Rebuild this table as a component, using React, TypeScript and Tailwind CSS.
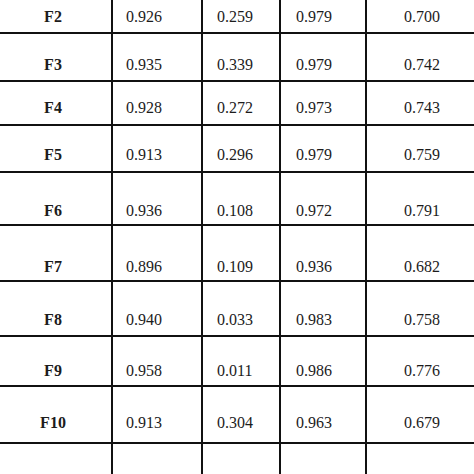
type Row = {
  label: string;
  values: string[];
  height: string;
  pad: string;
};

const rows: Row[] = [
  { label: "F2", values: ["0.926", "0.259", "0.979", "0.700"], height: "h-[34px]", pad: "pt-[9px]" },
  { label: "F3", values: ["0.935", "0.339", "0.979", "0.742"], height: "h-[48px]", pad: "pt-[23px]" },
  { label: "F4", values: ["0.928", "0.272", "0.973", "0.743"], height: "h-[44px]", pad: "pt-[18px]" },
  { label: "F5", values: ["0.913", "0.296", "0.979", "0.759"], height: "h-[47px]", pad: "pt-[21px]" },
  { label: "F6", values: ["0.936", "0.108", "0.972", "0.791"], height: "h-[53px]", pad: "pt-[30px]" },
  { label: "F7", values: ["0.896", "0.109", "0.936", "0.682"], height: "h-[56px]", pad: "pt-[33px]" },
  { label: "F8", values: ["0.940", "0.033", "0.983", "0.758"], height: "h-[55px]", pad: "pt-[30px]" },
  { label: "F9", values: ["0.958", "0.011", "0.986", "0.776"], height: "h-[50px]", pad: "pt-[26px]" },
  { label: "F10", values: ["0.913", "0.304", "0.963", "0.679"], height: "h-[57px]", pad: "pt-[28px]" },
];

const valuePads = ["pl-[13px]", "pl-[14px]", "pl-[15px]", "pl-[37px]"];

function TableRow({ row }: { row: Row }) {
  return (
    <div className={`grid grid-cols-[113px_90px_78px_86px_1fr] border-b-2 border-[#111] ${row.height}`}>
      <div className={`border-r-2 border-[#111] text-center pr-[5px] font-bold ${row.pad}`}>{row.label}</div>
      {row.values.map((v, i) => (
        <div
          key={i}
          className={`${i < 3 ? "border-r-2 border-[#111]" : ""} ${valuePads[i]} ${row.pad}`}
        >
          {v}
        </div>
      ))}
    </div>
  );
}

export default function App() {
  return (
    <div className="w-[474px] h-[474px] overflow-hidden bg-white text-[16px] leading-none text-[#1c1c1c] font-['Liberation_Serif','Times_New_Roman',serif]">
      {rows.map((r) => (
        <TableRow key={r.label} row={r} />
      ))}
      {/* next row, cut off by the frame */}
      <div className="grid grid-cols-[113px_90px_78px_86px_1fr] h-[60px]">
        <div className="border-r-2 border-[#111]" />
        <div className="border-r-2 border-[#111]" />
        <div className="border-r-2 border-[#111]" />
        <div className="border-r-2 border-[#111]" />
        <div />
      </div>
    </div>
  );
}
